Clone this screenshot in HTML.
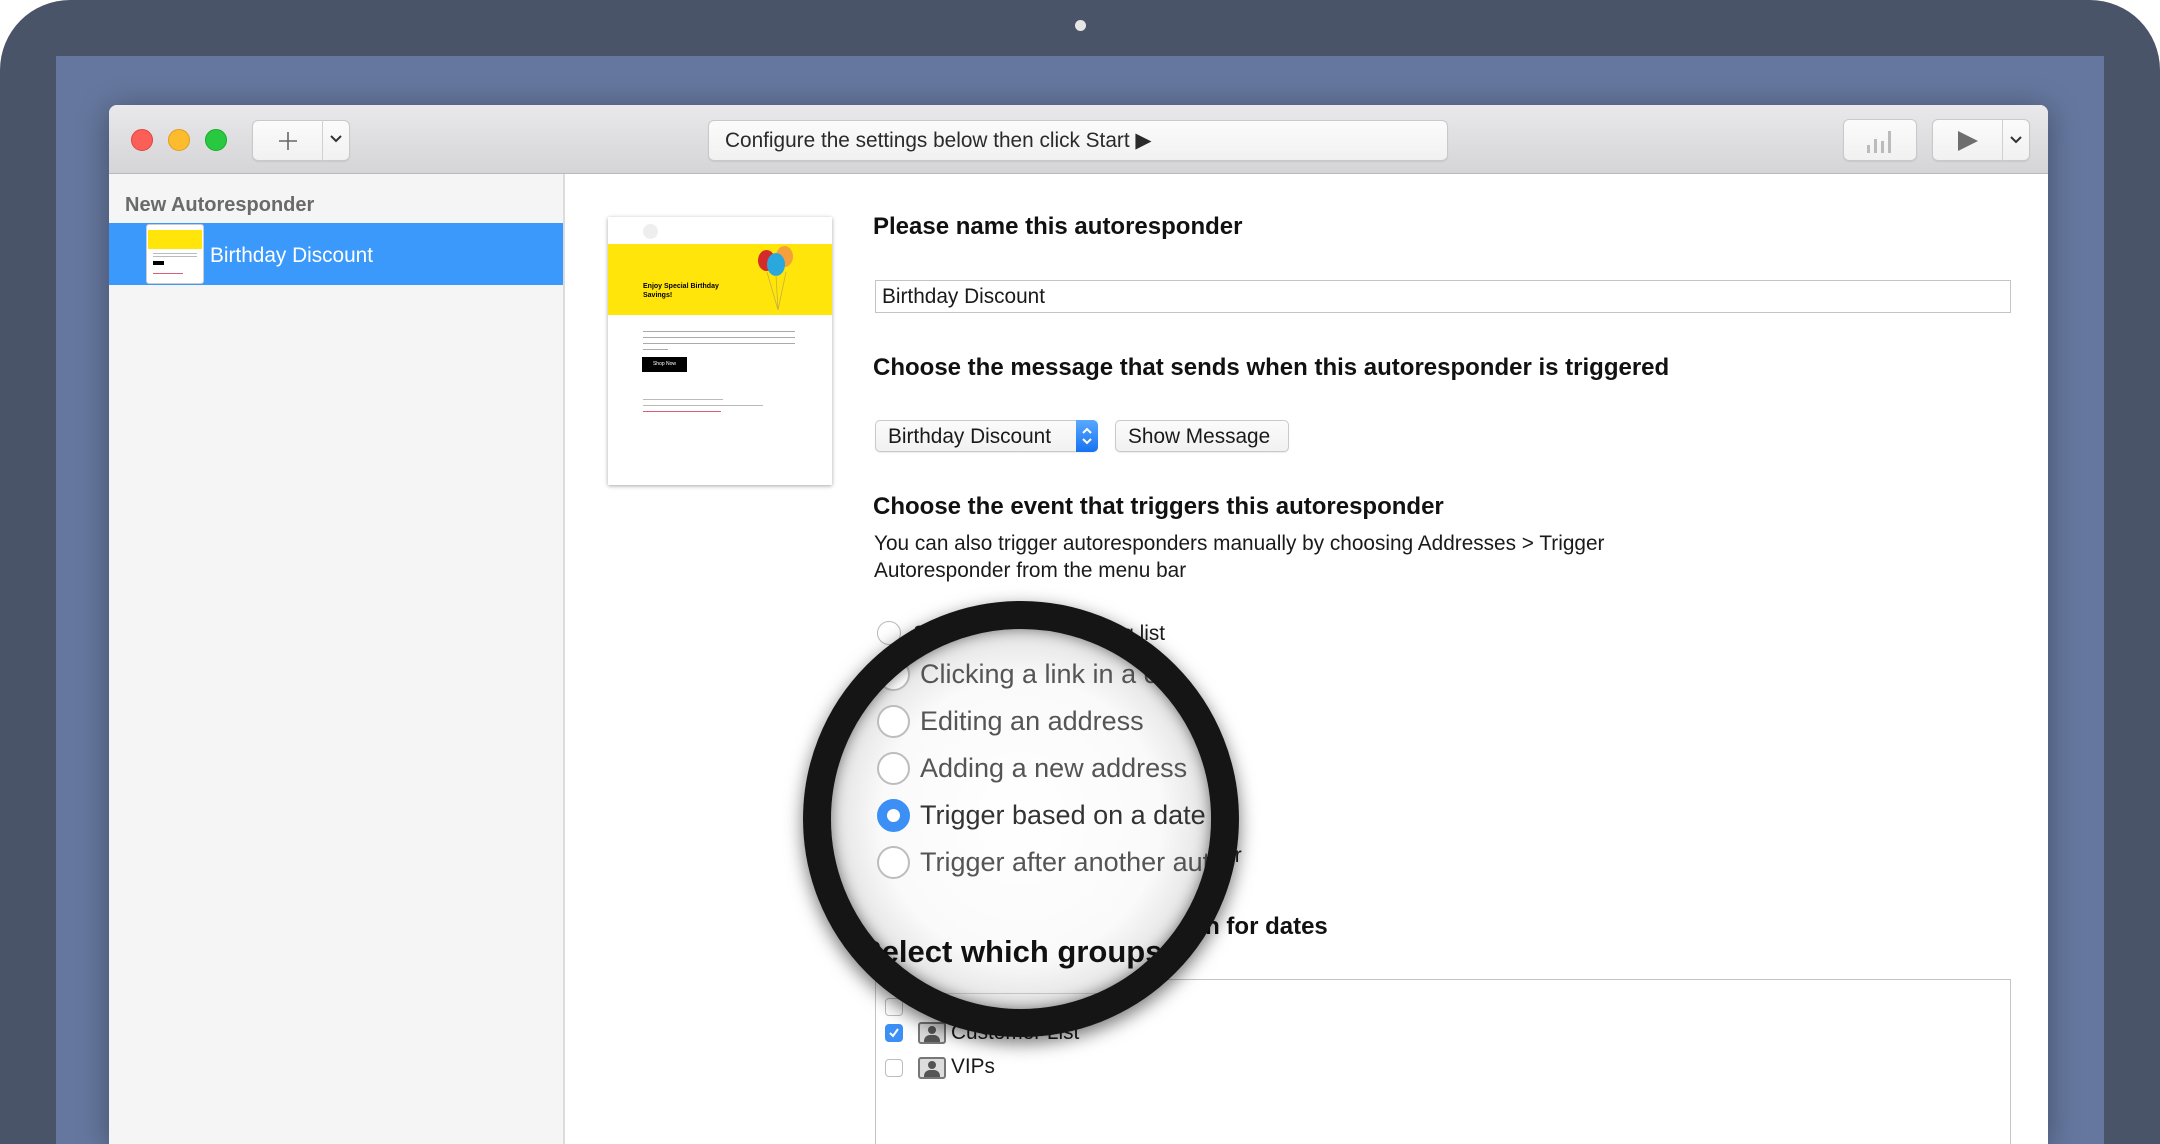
<!DOCTYPE html>
<html><head><meta charset="utf-8"><style>
*{margin:0;padding:0;box-sizing:border-box}
html,body{width:2160px;height:1144px;overflow:hidden}
body{background:#fff;font-family:"Liberation Sans",sans-serif;position:relative}
.abs{position:absolute}
#bezel{left:0;top:0;width:2160px;height:1144px;background:#4a5468;border-radius:70px 70px 0 0}
#screen{left:56px;top:56px;width:2048px;height:1088px;background:#65779e}
#win{left:109px;top:105px;width:1939px;height:1039px;background:#fff;border-radius:8px 8px 0 0;box-shadow:0 4px 30px rgba(0,0,0,.35);overflow:hidden}
#title{left:0;top:0;width:1939px;height:69px;background:linear-gradient(#e9e8ea,#d5d4d6);border-bottom:1px solid #b9b8ba}
.tl{width:22px;height:22px;border-radius:50%;top:24px}
.btn{background:linear-gradient(#fbfbfb,#f1f1f1);border:1px solid #c9c8ca;border-radius:6px;box-shadow:0 1px 1px rgba(0,0,0,.08)}
#side{left:0;top:69px;width:456px;height:980px;background:#f5f5f5;border-right:2px solid #dcdcdc}
.t{font-size:20.8px;color:#1a1a1a;white-space:nowrap}
.h{font-size:24px;font-weight:bold;color:#111;white-space:nowrap}
.radio{width:24px;height:24px;border-radius:50%;border:1.5px solid #b8b8b8;background:#fff}
.lr{width:33px;height:33px;border-radius:50%;border:2px solid #bdbdbd;background:#fff}
.lt{font-size:27px;color:#555;white-space:nowrap}
.cb{width:18px;height:18px;border-radius:4px;border:1.5px solid #bdbdbd;background:#fff}
.gi{width:28px;height:22px;border:2px solid #777;border-radius:3px;background:#ddd;overflow:hidden}
</style></head><body>
<div id="bezel" class="abs"></div>
<div class="abs" style="left:1075px;top:20px;width:11px;height:11px;border-radius:50%;background:#e6e6e6"></div>
<div id="screen" class="abs"></div>
<div id="win" class="abs">
 <div id="title" class="abs">
  <div class="abs tl" style="left:22px;background:#fc5f57;border:1px solid #e0443e"></div>
  <div class="abs tl" style="left:59px;background:#fdbc2e;border:1px solid #de9f1f"></div>
  <div class="abs tl" style="left:96px;background:#28c840;border:1px solid #1aab29"></div>
  <div class="abs btn" style="left:143px;top:15px;width:98px;height:41px"></div>
  <div class="abs" style="left:213px;top:15px;width:1px;height:41px;background:#d0d0d0"></div>
  <svg class="abs" style="left:168px;top:25px" width="22" height="22"><path d="M11 2v18M2 11h18" stroke="#666" stroke-width="1.6"/></svg>
  <svg class="abs" style="left:220px;top:29px" width="14" height="10"><path d="M2 2l5 5 5-5" fill="none" stroke="#333" stroke-width="2"/></svg>
  <div class="abs btn" style="left:599px;top:15px;width:740px;height:41px"></div>
  <div class="abs t" style="left:616px;top:23px;color:#2a2a2a">Configure the settings below then click Start ▶</div>
  <div class="abs btn" style="left:1734px;top:14px;width:74px;height:42px"></div>
  <svg class="abs" style="left:1755px;top:22px" width="34" height="28"><g fill="#bbb"><rect x="3" y="18" width="3" height="8"/><rect x="10" y="12" width="3" height="14"/><rect x="17" y="14" width="3" height="12"/><rect x="24" y="4" width="3" height="22"/></g></svg>
  <div class="abs btn" style="left:1823px;top:14px;width:98px;height:42px"></div>
  <div class="abs" style="left:1893px;top:14px;width:1px;height:42px;background:#d0d0d0"></div>
  <svg class="abs" style="left:1846px;top:24px" width="26" height="24"><path d="M3 2L23 12 3 22z" fill="#6e6e6e"/></svg>
  <svg class="abs" style="left:1900px;top:30px" width="14" height="10"><path d="M2 2l5 5 5-5" fill="none" stroke="#333" stroke-width="2"/></svg>
 </div>
 <div id="side" class="abs">
  <div class="abs t" style="left:16px;top:20px;color:#6a6a6a;font-weight:bold;font-size:20px">New Autoresponder</div>
  <div class="abs" style="left:0;top:49px;width:454px;height:62px;background:#3b99fc"></div>
  <div class="abs" style="left:37px;top:50px;width:58px;height:60px;background:#fff;border-radius:3px;border:1px solid #ccc">
   <div class="abs" style="left:1px;top:5px;width:54px;height:19px;background:#ffe50a"></div>
   <div class="abs" style="left:6px;top:28px;width:44px;height:1px;background:#bbb"></div>
   <div class="abs" style="left:6px;top:31px;width:44px;height:1px;background:#bbb"></div>
   <div class="abs" style="left:6px;top:36px;width:11px;height:4px;background:#000"></div>
   <div class="abs" style="left:6px;top:48px;width:30px;height:1px;background:#e05a7a"></div>
  </div>
  <div class="abs t" style="left:101px;top:70px;color:#fff">Birthday Discount</div>
 </div>
</div>

<div class="abs" style="left:608px;top:217px;width:224px;height:268px;background:#fff;box-shadow:0 1px 4px rgba(0,0,0,.35)">
  <div class="abs" style="left:35px;top:7px;width:15px;height:15px;border-radius:50%;background:#eee"></div>
  <div class="abs" style="left:0;top:27px;width:224px;height:71px;background:#ffe50a"></div>
  <div class="abs" style="left:35px;top:65px;font-size:7px;font-weight:bold;line-height:9px">Enjoy Special Birthday<br>Savings!</div>
  <div class="abs" style="left:150px;top:33px;width:17px;height:21px;border-radius:50%;background:#d42a2a"></div>
  <div class="abs" style="left:168px;top:29px;width:17px;height:21px;border-radius:50%;background:#f5a03a"></div>
  <div class="abs" style="left:159px;top:36px;width:18px;height:23px;border-radius:50%;background:#2aa7dd"></div>
  <svg class="abs" style="left:155px;top:55px" width="30" height="40"><path d="M4 0L15 38M13 3L15 38M23 0L15 38" stroke="#c9b040" fill="none" stroke-width=".8"/></svg>
  <div class="abs" style="left:35px;top:114px;width:152px;height:1px;background:#aaa"></div>
  <div class="abs" style="left:35px;top:120px;width:152px;height:1px;background:#aaa"></div>
  <div class="abs" style="left:35px;top:126px;width:152px;height:1px;background:#aaa"></div>
  <div class="abs" style="left:35px;top:132px;width:25px;height:1px;background:#aaa"></div>
  <div class="abs" style="left:34px;top:140px;width:45px;height:15px;background:#000;color:#fff;font-size:5px;text-align:center;line-height:15px">Shop Now</div>
  <div class="abs" style="left:35px;top:182px;width:80px;height:1px;background:#bbb"></div>
  <div class="abs" style="left:35px;top:188px;width:120px;height:1px;background:#bbb"></div>
  <div class="abs" style="left:35px;top:194px;width:78px;height:1px;background:#e05a7a"></div>
</div>
<div class="abs h" style="left:873px;top:213px">Please name this autoresponder</div>
<div class="abs" style="left:875px;top:280px;width:1136px;height:33px;border:1.5px solid #c4c4c4;background:#fff"></div>
<div class="abs t" style="left:882px;top:285px">Birthday Discount</div>
<div class="abs h" style="left:873px;top:354px">Choose the message that sends when this autoresponder is triggered</div>
<div class="abs btn" style="left:875px;top:420px;width:223px;height:32px;border-radius:5px"></div>
<div class="abs" style="left:1076px;top:420px;width:22px;height:32px;background:linear-gradient(#5aa9ff,#1672f0);border-radius:0 5px 5px 0"></div>
<svg class="abs" style="left:1080px;top:424px" width="14" height="24"><path d="M3 9l4-4 4 4M3 15l4 4 4-4" fill="none" stroke="#fff" stroke-width="2"/></svg>
<div class="abs t" style="left:888px;top:425px">Birthday Discount</div>
<div class="abs btn" style="left:1115px;top:420px;width:174px;height:32px;border-radius:5px"></div>
<div class="abs t" style="left:1128px;top:425px">Show Message</div>
<div class="abs h" style="left:873px;top:493px">Choose the event that triggers this autoresponder</div>
<div class="abs t" style="left:874px;top:530px;line-height:27px">You can also trigger autoresponders manually by choosing Addresses &gt; Trigger<br>Autoresponder from the menu bar</div>
<div class="abs radio" style="left:877px;top:621px"></div><div class="abs t" style="left:913px;top:622px">Subscribing to a mailing list</div>
<div class="abs t" style="left:913px;top:659px">Unsubscribing</div>
<div class="abs t" style="left:913px;top:696px">Clicking a link in a campaign</div>
<div class="abs t" style="left:913px;top:733px">Editing an address</div>
<div class="abs t" style="left:913px;top:770px">Adding a new address</div>
<div class="abs t" style="left:913px;top:807px">Trigger based on a date</div>
<div class="abs t" style="left:913px;top:844px">Trigger after another autoresponder</div>
<div class="abs h" style="left:873px;top:913px">Select which groups to search for dates</div>
<div class="abs" style="left:875px;top:979px;width:1136px;height:200px;border:1.5px solid #c4c4c4;background:#fff"></div>
<div class="abs cb" style="left:885px;top:998px"></div>
<div class="abs cb" style="left:885px;top:1024px;background:#3b8ff5;border-color:#3b8ff5"></div>
<svg class="abs" style="left:887px;top:1026px" width="14" height="14"><path d="M3 7l3 3 5-7" fill="none" stroke="#fff" stroke-width="2"/></svg>
<div class="abs gi" style="left:918px;top:1022px"><div class="abs" style="left:8px;top:2px;width:8px;height:8px;border-radius:50%;background:#555"></div><div class="abs" style="left:4px;top:11px;width:16px;height:8px;border-radius:6px 6px 0 0;background:#555"></div></div>
<div class="abs t" style="left:951px;top:1021px">Customer List</div>
<div class="abs cb" style="left:885px;top:1059px"></div>
<div class="abs gi" style="left:918px;top:1057px"><div class="abs" style="left:8px;top:2px;width:8px;height:8px;border-radius:50%;background:#555"></div><div class="abs" style="left:4px;top:11px;width:16px;height:8px;border-radius:6px 6px 0 0;background:#555"></div></div>
<div class="abs t" style="left:951px;top:1055px">VIPs</div>

<div class="abs" style="left:0;top:0;width:2160px;height:1144px;clip-path:circle(192px at 1021px 819px)">
 <div class="abs" style="left:0;top:0;width:2160px;height:1144px;background:radial-gradient(circle at 1021px 819px,#fff 0,#fafafa 140px,#e2e2e2 192px)"></div>
 <div class="abs lr" style="left:877px;top:658px"></div><div class="abs lt" style="left:920px;top:659px">Clicking a link in a campaign</div>
 <div class="abs lr" style="left:877px;top:705px"></div><div class="abs lt" style="left:920px;top:706px">Editing an address</div>
 <div class="abs lr" style="left:877px;top:752px"></div><div class="abs lt" style="left:920px;top:753px">Adding a new address</div>
 <div class="abs lr" style="left:877px;top:799px;border:10px solid #3b8ff5"></div><div class="abs lt" style="left:920px;top:800px;color:#333">Trigger based on a date</div>
 <div class="abs lr" style="left:877px;top:846px"></div><div class="abs lt" style="left:920px;top:847px">Trigger after another autoresponder</div>
 <div class="abs" style="left:861px;top:934px;font-size:31px;font-weight:bold;color:#111;white-space:nowrap">Select which groups to search for dates</div>
 <div class="abs" style="left:875px;top:993px;width:1136px;height:1px;background:#c4c4c4"></div>
 <div class="abs cb" style="left:885px;top:1000px;width:22px;height:22px"></div>
</div>
<div class="abs" style="left:803px;top:601px;width:436px;height:436px;border-radius:50%;border:28px solid #151515;box-shadow:0 6px 18px rgba(0,0,0,.55),inset 0 0 14px rgba(0,0,0,.5)"></div>
</body></html>
